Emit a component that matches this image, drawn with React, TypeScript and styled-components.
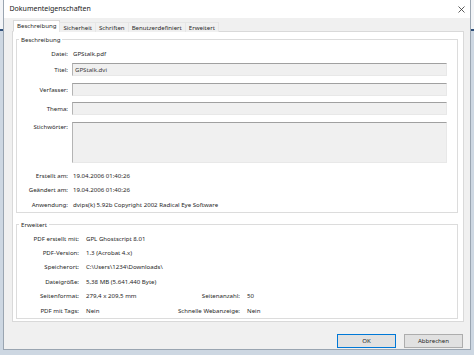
import React from "react";
import styled, { createGlobalStyle } from "styled-components";

const GlobalStyle = createGlobalStyle`
  html, body {
    margin: 0;
    padding: 0;
  }
  body {
    width: 474px;
    height: 355px;
    overflow: hidden;
    font-family: "Noto Sans", "Open Sans", "Liberation Sans", sans-serif;
    font-size: 6.1px;
    color: #262626;
  }
`;

const Desktop = styled.div`
  width: 474px;
  height: 355px;
  box-sizing: border-box;
  padding-left: 3px;
  background: linear-gradient(
    to bottom,
    #f2f4f7 0,
    #f2f4f7 29px,
    #30507a 29px,
    #30507a 31px,
    #cdd7e2 31px
  );
`;

const Window = styled.div`
  width: 468px;
  height: 350px;
  box-sizing: border-box;
  border: 1px solid #9aa5b1;
  border-top: none;
  background: #f0f0f0;
  display: flex;
  flex-direction: column;
`;

const TitleBar = styled.div`
  flex: none;
  height: 18px;
  background: #fff;
  display: flex;
  align-items: center;
  justify-content: space-between;
  padding: 0 5px 0 5.5px;
`;

const Title = styled.span`
  color: #1a1a1a;
  font-size: 7px;
  line-height: 10px;
`;

const DialogBody = styled.div`
  flex: 1;
  display: flex;
  flex-direction: column;
  padding: 2px 6px 2px 8px;
`;

const TabStrip = styled.div`
  display: flex;
  align-items: flex-end;
  height: 12px;
  padding-left: 1px;
  margin-bottom: -1px;
  position: relative;
  z-index: 1;
`;

const Tab = styled.div<{ $active?: boolean }>`
  box-sizing: border-box;
  height: ${p => (p.$active ? 12 : 10)}px;
  padding: 0 3px;
  line-height: 9px;
  white-space: nowrap;
  border: 1px solid ${p => (p.$active ? "#d9d9d9" : "#e6e6e6")};
  border-bottom: ${p => (p.$active ? "1px solid #fff" : "none")};
  background: ${p => (p.$active ? "#fff" : "#f0f0f0")};
  & + & {
    margin-left: -1px;
  }
`;

const TabPanel = styled.div`
  box-sizing: border-box;
  height: 291px;
  background: #fff;
  border: 1px solid #d9d9d9;
  padding: 3px 5px 2px 3px;
  display: flex;
  flex-direction: column;
  gap: 7px;
`;

const Group = styled.fieldset<{ $grow?: boolean }>`
  margin: 0;
  min-width: 0;
  padding: 0 10px 1px 0;
  border: 1px solid #dcdcdc;
  flex: ${p => (p.$grow ? 1 : "none")};
`;

const Legend = styled.legend`
  margin-left: 2px;
  padding: 0 2px;
  line-height: 9px;
`;

const FieldRow = styled.div<{ $mt: number; $h: number; $top?: boolean }>`
  display: grid;
  grid-template-columns: 51px 1fr;
  column-gap: 4px;
  margin-top: ${p => p.$mt}px;
  height: ${p => p.$h}px;
  align-items: ${p => (p.$top ? "start" : "center")};
`;

const Label = styled.span`
  text-align: right;
  white-space: nowrap;
  line-height: 9px;
`;

const Value = styled.span`
  padding-left: 1px;
  white-space: nowrap;
  line-height: 9px;
`;

const InputBox = styled.div`
  box-sizing: border-box;
  height: 100%;
  background: #f0f0f0;
  border-top: 1px solid #a0a0a0;
  border-left: 1px solid #b4b4b4;
  border-right: 1px solid #e8e8e8;
  border-bottom: 1px solid #e8e8e8;
  padding-left: 2px;
  line-height: 11px;
  color: #3a3a3a;
`;

const InfoGrid = styled.div`
  display: grid;
  grid-template-columns: 62px 77px 70px 1fr;
  grid-auto-rows: 14.4px;
  column-gap: 7px;
  align-items: center;
  margin-top: 2.5px;
`;

const WideValue = styled(Value)`
  padding-left: 0;
  grid-column: span 3;
`;

const InfoValue = styled(Value)`
  padding-left: 0;
`;

const ButtonRow = styled.div`
  display: flex;
  justify-content: flex-end;
  gap: 8px;
  margin-top: 12px;
  padding-right: 1px;
`;

const Button = styled.button<{ $default?: boolean }>`
  box-sizing: border-box;
  width: 59px;
  height: 14px;
  padding: 0;
  font: inherit;
  line-height: 12px;
  color: #262626;
  background: #e1e1e1;
  border: 1px solid ${p => (p.$default ? "#0078d7" : "#adadad")};
`;

const CloseIcon = () => (
  <svg width="7" height="7" viewBox="0 0 7 7">
    <path d="M0.5 0.5 L6.5 6.5 M6.5 0.5 L0.5 6.5" stroke="#333" strokeWidth="0.8" fill="none" />
  </svg>
);

const tabs = ["Beschreibung", "Sicherheit", "Schriften", "Benutzerdefiniert", "Erweitert"];

type Field = { label: string; value?: string; input?: boolean; mt: number; h: number };

const fields: Field[] = [
  { label: "Datei:", value: "GPStalk.pdf", mt: 3, h: 13 },
  { label: "Titel:", value: "GPStalk.dvi", input: true, mt: 3, h: 13 },
  { label: "Verfasser:", value: "", input: true, mt: 7, h: 13 },
  { label: "Thema:", value: "", input: true, mt: 6, h: 13 },
  { label: "Stichwörter:", value: "", input: true, mt: 7, h: 41 },
  { label: "Erstellt am:", value: "19.04.2006 01:40:26", mt: 5.5, h: 13 },
  { label: "Geändert am:", value: "19.04.2006 01:40:26", mt: 1, h: 13 },
  { label: "Anwendung:", value: "dvips(k) 5.92b Copyright 2002 Radical Eye Software", mt: 2, h: 13 },
];

type Info = { label: string; value: string; label2?: string; value2?: string };

const infos: Info[] = [
  { label: "PDF erstellt mit:", value: "GPL Ghostscript 8.01" },
  { label: "PDF-Version:", value: "1.3 (Acrobat 4.x)" },
  { label: "Speicherort:", value: "C:\\Users\\1234\\Downloads\\" },
  { label: "Dateigröße:", value: "5,38 MB (5.641.440 Byte)" },
  { label: "Seitenformat:", value: "279,4 x 209,5 mm", label2: "Seitenanzahl:", value2: "50" },
  { label: "PDF mit Tags:", value: "Nein", label2: "Schnelle Webanzeige:", value2: "Nein" },
];

export default function App() {
  return (
    <Desktop>
      <GlobalStyle />
      <Window>
        <TitleBar>
          <Title>Dokumenteigenschaften</Title>
          <CloseIcon />
        </TitleBar>
        <DialogBody>
          <TabStrip>
            {tabs.map((t, i) => (
              <Tab key={t} $active={i === 0}>{t}</Tab>
            ))}
          </TabStrip>
          <TabPanel>
            <Group>
              <Legend>Beschreibung</Legend>
              {fields.map(f => (
                <FieldRow key={f.label} $mt={f.mt} $h={f.h} $top={f.h > 13}>
                  <Label>{f.label}</Label>
                  {f.input ? <InputBox>{f.value}</InputBox> : <Value>{f.value}</Value>}
                </FieldRow>
              ))}
            </Group>
            <Group $grow>
              <Legend>Erweitert</Legend>
              <InfoGrid>
                {infos.map(r => (
                  <React.Fragment key={r.label}>
                    <Label>{r.label}</Label>
                    {r.label2 ? (
                      <>
                        <InfoValue>{r.value}</InfoValue>
                        <Label>{r.label2}</Label>
                        <InfoValue>{r.value2}</InfoValue>
                      </>
                    ) : (
                      <WideValue>{r.value}</WideValue>
                    )}
                  </React.Fragment>
                ))}
              </InfoGrid>
            </Group>
          </TabPanel>
          <ButtonRow>
            <Button $default>OK</Button>
            <Button>Abbrechen</Button>
          </ButtonRow>
        </DialogBody>
      </Window>
    </Desktop>
  );
}
